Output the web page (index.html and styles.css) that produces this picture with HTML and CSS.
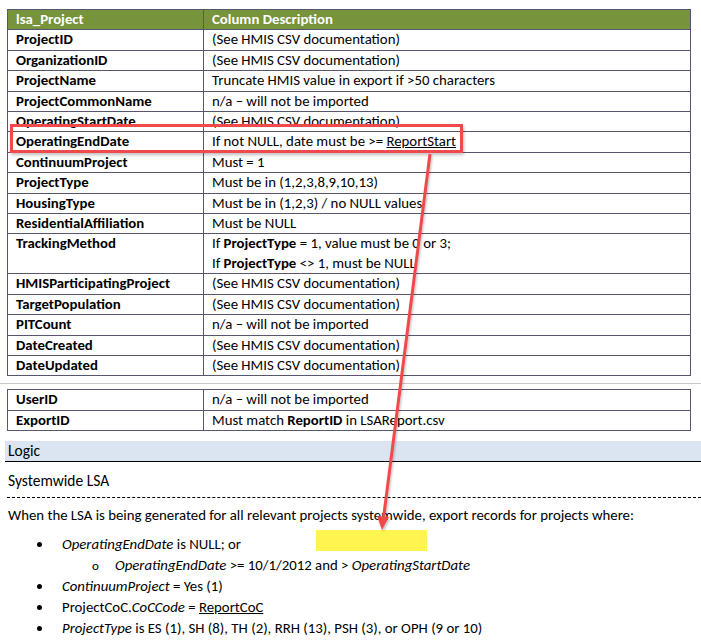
FILE: index.html
```html
<!DOCTYPE html>
<html>
<head>
<meta charset="utf-8">
<link rel="stylesheet" href="styles.css">
</head>
<body>
<div class="page">
  <table class="spec">
    <thead>
      <tr><th class="c1">lsa_Project</th><th>Column Description</th></tr>
    </thead>
    <tbody>
      <tr><td class="c1">ProjectID</td><td>(See HMIS CSV documentation)</td></tr>
      <tr><td class="c1">OrganizationID</td><td>(See HMIS CSV documentation)</td></tr>
      <tr><td class="c1">ProjectName</td><td>Truncate HMIS value in export if &gt;50 characters</td></tr>
      <tr><td class="c1">ProjectCommonName</td><td>n/a – will not be imported</td></tr>
      <tr><td class="c1">OperatingStartDate</td><td>(See HMIS CSV documentation)</td></tr>
      <tr><td class="c1">OperatingEndDate</td><td>If not NULL, date must be &gt;= <u>ReportStart</u></td></tr>
      <tr><td class="c1">ContinuumProject</td><td>Must = 1</td></tr>
      <tr><td class="c1">ProjectType</td><td>Must be in (1,2,3,8,9,10,13)</td></tr>
      <tr><td class="c1">HousingType</td><td>Must be in (1,2,3) / no NULL values</td></tr>
      <tr><td class="c1">ResidentialAffiliation</td><td>Must be NULL</td></tr>
      <tr><td class="c1">TrackingMethod</td><td>If <b>ProjectType</b> = 1, value must be 0 or 3;<br>If <b>ProjectType</b> &lt;&gt; 1, must be NULL</td></tr>
      <tr><td class="c1">HMISParticipatingProject</td><td>(See HMIS CSV documentation)</td></tr>
      <tr><td class="c1">TargetPopulation</td><td>(See HMIS CSV documentation)</td></tr>
      <tr><td class="c1">PITCount</td><td>n/a – will not be imported</td></tr>
      <tr><td class="c1">DateCreated</td><td>(See HMIS CSV documentation)</td></tr>
      <tr><td class="c1">DateUpdated</td><td>(See HMIS CSV documentation)</td></tr>
    </tbody>
  </table>
  <div class="pagebreak"></div>
  <table class="spec spec2">
    <tbody>
      <tr><td class="c1">UserID</td><td>n/a – will not be imported</td></tr>
      <tr><td class="c1">ExportID</td><td>Must match <b>ReportID</b> in LSAReport.csv</td></tr>
    </tbody>
  </table>
  <div class="logic">Logic</div>
  <div class="subhead">Systemwide LSA</div>
  <p class="intro">When the LSA is being generated for all relevant projects systemwide, export records for projects where:</p>
  <ul class="bullets">
    <li><i>OperatingEndDate</i> is NULL; or
      <ul class="sub">
        <li><i>OperatingEndDate</i> &gt;= 10/1/2012 and &gt; <i>OperatingStartDate</i></li>
      </ul>
    </li>
    <li><i>ContinuumProject</i> = Yes (1)</li>
    <li>ProjectCoC.<i>CoCCode</i> = <u>ReportCoC</u></li>
    <li><i>ProjectType</i> is ES (1), SH (8), TH (2), RRH (13), PSH (3), or OPH (9 or 10)</li>
  </ul>

  <div class="highlight"></div>
  <div class="callout"></div>
  <svg class="arrow" width="701" height="643" viewBox="0 0 701 643">
    <defs>
      <filter id="sh" x="-20%" y="-20%" width="140%" height="140%">
        <feDropShadow dx="1" dy="2" stdDeviation="1.2" flood-color="#000" flood-opacity="0.25"/>
      </filter>
    </defs>
    <g filter="url(#sh)">
      <line x1="430" y1="154" x2="383.5" y2="518" stroke="#f04a4c" stroke-width="3"/>
      <polygon points="382,530 377,516 389,517" fill="#f04a4c"/>
    </g>
  </svg>
</div>
</body>
</html>
```
FILE: styles.css
```css
html, body {
  margin: 0;
  padding: 0;
  background: #ffffff;
}
body {
  font-family: Carlito, Calibri, Lato, "Liberation Sans", sans-serif;
  font-size: 14.8px;
  color: #000;
}
.page {
  position: relative;
  width: 701px;
  height: 643px;
  overflow: hidden;
  padding-top: 9px;
  box-sizing: border-box;
}
.spec {
  margin-left: 7px;
  width: 684px;
  border-collapse: collapse;
  table-layout: fixed;
}
.spec th, .spec td {
  border: 1px solid #56566f;
  padding: 0 8px;
  line-height: 19.4px;
  text-align: left;
  vertical-align: top;
  white-space: nowrap;
}
.spec .c1 {
  width: 179px;
  font-weight: bold;
}
.spec th {
  background: #77933c;
  color: #fff;
  font-weight: bold;
}
.spec td b { font-weight: bold; }
.pagebreak {
  height: 0;
  border-top: 1px solid #c8c8c8;
  margin: 7px 0 5px 0;
}
.logic {
  margin: 10px 0 0 5px;
  background: #dbe5f1;
  border-bottom: 1px solid #000;
  padding: 0 3px;
  line-height: 20px;
  font-size: 15.5px;
}
.subhead {
  margin-top: 9px;
  line-height: 20px;
  font-size: 15.5px;
  padding-bottom: 6px;
  margin-left: 7px;
  padding-left: 1px;
  border-bottom: 1px dashed #000;
}
.intro {
  margin: 7px 0 0 8px;
  line-height: 20px;
}
.bullets {
  margin: 9px 0 0 0;
  padding-left: 62px;
  list-style: none;
}
.bullets li {
  position: relative;
  line-height: 21px;
}
.bullets > li::before {
  content: "";
  position: absolute;
  left: -25px;
  top: 8px;
  width: 5px;
  height: 5px;
  border-radius: 50%;
  background: #000;
}
.sub {
  list-style: none;
  padding-left: 53px;
  margin: 0;
}
.sub li::before {
  content: "o";
  position: absolute;
  left: -23px;
  top: 0;
  font-size: 13px;
}
.highlight {
  position: absolute;
  left: 316px;
  top: 530px;
  width: 111px;
  height: 21px;
  background: #fff450;
}
.callout {
  position: absolute;
  left: 10px;
  top: 124px;
  width: 447px;
  height: 23px;
  border: 3px solid #f04a4c;
  box-shadow: 1px 2px 3px rgba(0,0,0,0.25);
}
.arrow {
  position: absolute;
  left: 0;
  top: 0;
  pointer-events: none;
}
```
